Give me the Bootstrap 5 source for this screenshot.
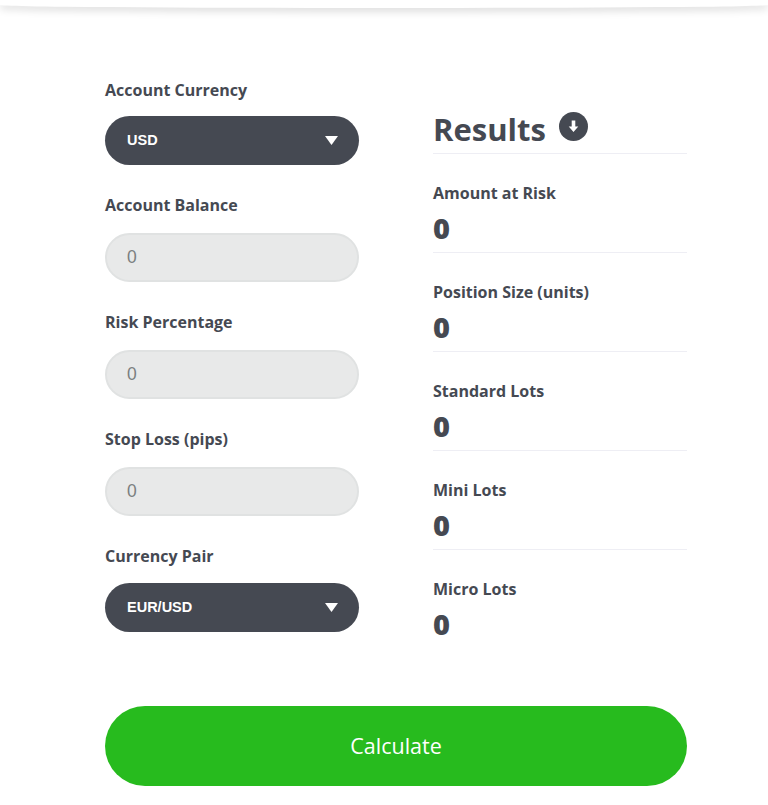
<!DOCTYPE html>
<html lang="en">
<head>
<meta charset="utf-8">
<title>Position Size Calculator</title>
<link rel="stylesheet" href="https://cdn.jsdelivr.net/npm/bootstrap@5.3.0/dist/css/bootstrap.min.css">
<style>
body { background: #fff; color: #454952; font-family: "Open Sans", "Noto Sans", sans-serif; overflow: hidden; }
.top-strip { height: 8px; box-shadow: 0 3px 8px rgba(0,0,0,.16); border-radius: 0 0 50% 50% / 0 0 3px 3px; }
.calc-wrap { width: 582px; margin-left: 105px; padding-top: 71px; }
.calc-cols { display: grid; grid-template-columns: 254px 254px; column-gap: 74px; }
.field-label { display: block; font-size: 16px; font-weight: 700; line-height: 22px; margin: 0 0 15px; color: #454952; }
.field-group { margin-bottom: 29px; }
.field-group:last-child { margin-bottom: 0; }
.field-select.form-select { height: 49px; border: 0; border-radius: 25px; padding: 0 40px 0 22px; background-color: #454952; background-image: none; color: #fff; font-family: "Liberation Sans", sans-serif; font-size: 14.5px; font-weight: 700; }
.select-shell { position: relative; }
.select-shell-low { margin-top: 16px; }
.select-caret { position: absolute; right: 21px; top: 20px; pointer-events: none; }
.field-input.form-control { height: 49px; margin-top: 17px; border: 2px solid #e0e2e2; border-radius: 25px; padding: 0 20px; background: #e8e9e9; color: #7b7f80; font-family: "Liberation Sans", sans-serif; font-size: 17.5px; box-shadow: none; }
.field-input.form-control::placeholder { color: #7b7f80; opacity: 1; }
.results-head { display: flex; gap: 13px; align-items: flex-start; height: 50px; margin-top: 25px; border-bottom: 1px solid #eeeef4; }
.results-title { font-size: 31px; font-weight: 700; line-height: 50px; margin: 0; color: #454952; }
.results-icon { margin-top: 8px; flex: none; }
.result-item { height: 99px; padding-top: 27px; border-bottom: 1px solid #eeeef4; }
.result-item:last-child { border-bottom: 0; }
.result-label { font-size: 16px; font-weight: 700; line-height: 24px; }
.result-value { font-size: 29px; font-weight: 800; line-height: 36px; margin-top: 5px; }
.calc-btn.btn { display: block; width: 100%; height: 80px; margin-top: 57px; border: 0; border-radius: 40px; background: #27bb1e; color: #fff; font-size: 21.5px; font-weight: 400; }
</style>
</head>
<body>
<div class="top-strip"></div>
<main class="calc-wrap">
  <div class="calc-cols">
    <form>
      <div class="field-group">
        <label class="field-label" for="cur">Account Currency</label>
        <div class="select-shell">
          <select id="cur" class="form-select field-select"><option>USD</option></select>
          <svg class="select-caret" width="13" height="9" viewBox="0 0 13 9"><path d="M0 0H13L6.5 9Z" fill="#fff"/></svg>
        </div>
      </div>
      <div class="field-group">
        <label class="field-label mb-0" for="bal">Account Balance</label>
        <input id="bal" class="form-control field-input" placeholder="0">
      </div>
      <div class="field-group">
        <label class="field-label mb-0" for="risk">Risk Percentage</label>
        <input id="risk" class="form-control field-input" placeholder="0">
      </div>
      <div class="field-group">
        <label class="field-label mb-0" for="stop">Stop Loss (pips)</label>
        <input id="stop" class="form-control field-input" placeholder="0">
      </div>
      <div class="field-group">
        <label class="field-label mb-0" for="pair">Currency Pair</label>
        <div class="select-shell select-shell-low">
          <select id="pair" class="form-select field-select"><option>EUR/USD</option></select>
          <svg class="select-caret" width="13" height="9" viewBox="0 0 13 9"><path d="M0 0H13L6.5 9Z" fill="#fff"/></svg>
        </div>
      </div>
    </form>
    <section>
      <div class="results-head">
        <h2 class="results-title">Results</h2>
        <svg class="results-icon" width="29" height="29" viewBox="0 0 29 29"><circle cx="14.5" cy="14.5" r="14.5" fill="#454952"/><path d="M12.7 8.5h3.6v6h3L14.5 20l-4.8-5.5h3z" fill="#fff"/></svg>
      </div>
      <div class="result-item"><div class="result-label">Amount at Risk</div><div class="result-value">0</div></div>
      <div class="result-item"><div class="result-label">Position Size (units)</div><div class="result-value">0</div></div>
      <div class="result-item"><div class="result-label">Standard Lots</div><div class="result-value">0</div></div>
      <div class="result-item"><div class="result-label">Mini Lots</div><div class="result-value">0</div></div>
      <div class="result-item"><div class="result-label">Micro Lots</div><div class="result-value">0</div></div>
    </section>
  </div>
  <button type="button" class="btn calc-btn">Calculate</button>
</main>
<script src="https://cdn.jsdelivr.net/npm/bootstrap@5.3.0/dist/js/bootstrap.bundle.min.js"></script>
</body>
</html>
